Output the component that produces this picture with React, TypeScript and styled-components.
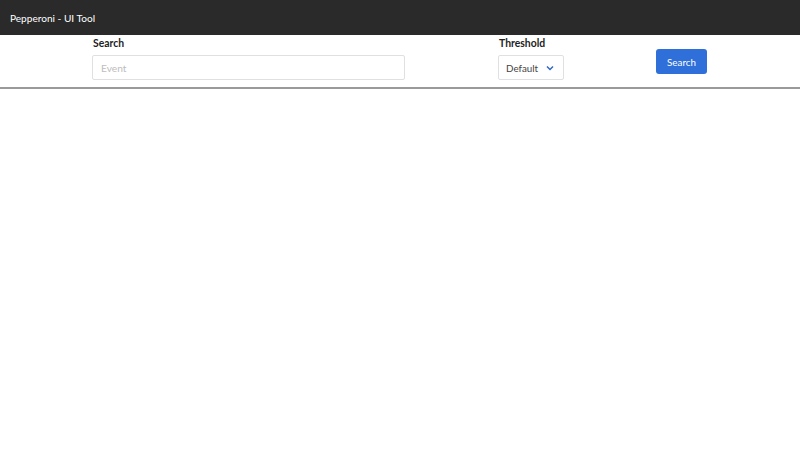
import React from 'react';
import styled, { createGlobalStyle } from 'styled-components';

const GlobalStyle = createGlobalStyle`
  html, body {
    margin: 0;
    padding: 0;
    background: #ffffff;
    font-family: Lato, "Open Sans", "Liberation Sans", sans-serif;
  }
`;

const NavBar = styled.header`
  height: 35px;
  background-color: #2a2a2a;
  color: #ffffff;
  display: flex;
  align-items: center;
  padding-left: 10px;
  font-size: 10.1px;
`;

const SearchBar = styled.div`
  display: flex;
  align-items: flex-start;
  height: 52px;
  padding-left: 92px;
  border-bottom: 2px solid #9a9a9a;
  box-shadow: 0 1px 1px rgba(0, 0, 0, 0.08);
`;

const Field = styled.div<{ $width: number; $gap: number }>`
  display: flex;
  flex-direction: column;
  width: ${(p) => p.$width}px;
  margin-right: ${(p) => p.$gap}px;
`;

const Label = styled.label`
  font-size: 10.4px;
  font-weight: 700;
  color: #222;
  height: 17px;
  line-height: 17px;
  margin-bottom: 3px;
  padding-left: 1px;
`;

const Input = styled.input`
  box-sizing: border-box;
  height: 25px;
  width: 100%;
  border: 1px solid #e0e0e0;
  border-radius: 2px;
  padding: 0 8px;
  font-family: inherit;
  font-size: 10.2px;
  color: #333;
  outline: none;

  &::placeholder {
    color: #bdbdbd;
  }
`;

const Select = styled.div`
  box-sizing: border-box;
  height: 25px;
  width: 66px;
  border: 1px solid #e0e0e0;
  border-radius: 2px;
  display: flex;
  align-items: center;
  padding: 0 7px;
  gap: 8px;
  font-size: 9.8px;
  color: #444;
`;

const Button = styled.button`
  margin-top: 14px;
  height: 25px;
  width: 51px;
  background-color: #2e6fd9;
  color: #ffffff;
  border: none;
  border-radius: 3px;
  font-family: inherit;
  font-size: 9.8px;
  cursor: pointer;
  padding: 0;
`;

const Chevron = () => (
  <svg width="8" height="6" viewBox="0 0 8 6">
    <path d="M1 1.5l3 3 3-3" fill="none" stroke="#2f68c4" strokeWidth="1.5" />
  </svg>
);

const App: React.FC = () => (
  <>
    <GlobalStyle />
    <NavBar>Pepperoni - UI Tool</NavBar>
    <SearchBar>
      <Field $width={313} $gap={93}>
        <Label>Search</Label>
        <Input placeholder="Event" />
      </Field>
      <Field $width={66} $gap={92}>
        <Label>Threshold</Label>
        <Select>
          Default
          <Chevron />
        </Select>
      </Field>
      <Button>Search</Button>
    </SearchBar>
  </>
);

export default App;
